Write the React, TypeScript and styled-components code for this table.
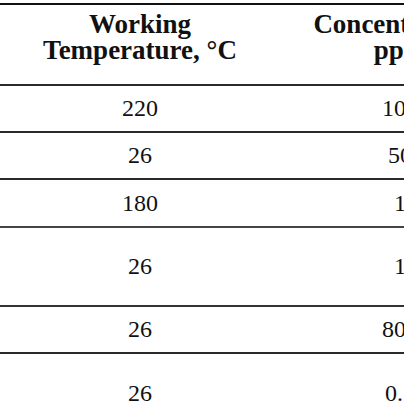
import React from "react";
import styled, { createGlobalStyle } from "styled-components";

const Global = createGlobalStyle`
  html, body { margin: 0; padding: 0; background: #fff; overflow: hidden; }
  body { width: 404px; height: 404px; }
`;

const Page = styled.div`
  width: 404px;
  height: 404px;
  overflow: hidden;
  padding-top: 3px;
  box-sizing: border-box;
  font-family: "Liberation Serif", "Times New Roman", serif;
  color: #111;
`;

const Table = styled.div`
  width: 520px;
  border-top: 2px solid #111;
`;

const Row = styled.div<{ $h: number; $line?: string }>`
  display: flex;
  height: ${(p) => p.$h}px;
  border-bottom: 2px solid ${(p) => p.$line ?? "#2a2a2a"};
`;

const Cell = styled.div<{ $w: number }>`
  width: ${(p) => p.$w}px;
  flex: none;
  display: flex;
  align-items: center;
  justify-content: center;
  text-align: center;
  font-size: 24px;
  white-space: nowrap;
`;

const HeadCell = styled(Cell)`
  align-items: flex-start;
  box-sizing: border-box;
  padding-top: 6px;
  font-weight: bold;
  font-size: 27px;
  line-height: 26px;
`;

const rows: { t: string; c: string; h: number; line?: string }[] = [
  { t: "220", c: "100", h: 45 },
  { t: "26", c: "50", h: 45 },
  { t: "180", c: "1", h: 46, line: "#444" },
  { t: "26", c: "1", h: 77, line: "#333" },
  { t: "26", c: "800", h: 45 },
  { t: "26", c: "0.5", h: 78 },
];

export default function App() {
  return (
    <>
      <Global />
      <Page>
        <Table>
          <Row $h={79}>
            <HeadCell $w={280}>
              Working
              <br />
              Temperature, °C
            </HeadCell>
            <HeadCell $w={240}>
              Concentration,
              <br />
              ppm
            </HeadCell>
          </Row>
          {rows.map((r, i) => (
            <Row key={i} $h={r.h} $line={r.line}>
              <Cell $w={280}>{r.t}</Cell>
              <Cell $w={240}>{r.c}</Cell>
            </Row>
          ))}
        </Table>
      </Page>
    </>
  );
}
